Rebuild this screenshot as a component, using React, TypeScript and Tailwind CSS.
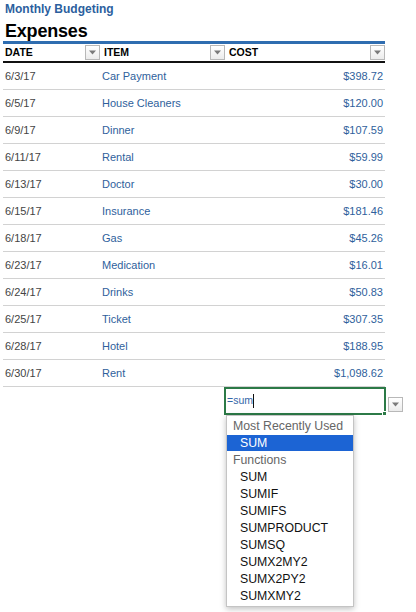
import React from "react";

const rows = [
  ["6/3/17", "Car Payment", "$398.72"],
  ["6/5/17", "House Cleaners", "$120.00"],
  ["6/9/17", "Dinner", "$107.59"],
  ["6/11/17", "Rental", "$59.99"],
  ["6/13/17", "Doctor", "$30.00"],
  ["6/15/17", "Insurance", "$181.46"],
  ["6/18/17", "Gas", "$45.26"],
  ["6/23/17", "Medication", "$16.01"],
  ["6/24/17", "Drinks", "$50.83"],
  ["6/25/17", "Ticket", "$307.35"],
  ["6/28/17", "Hotel", "$188.95"],
  ["6/30/17", "Rent", "$1,098.62"],
];

const funcs = ["SUM", "SUMIF", "SUMIFS", "SUMPRODUCT", "SUMSQ", "SUMX2MY2", "SUMX2PY2", "SUMXMY2"];

function DropBtn() {
  return (
    <div className="w-[15px] h-[15px] border border-[#b8b8b8] bg-gradient-to-b from-white to-[#ececec] flex items-center justify-center shrink-0">
      <svg width="7" height="5" viewBox="0 0 7 5">
        <path d="M0 0.5 L7 0.5 L3.5 4.5 Z" fill="#7a7a7a" />
      </svg>
    </div>
  );
}

export default function App() {
  return (
    <div
      className="relative w-[416px] h-[612px] bg-white overflow-hidden"
      style={{ fontFamily: '"Liberation Sans", Arial, sans-serif' }}
    >
      <div className="pl-[5px] pt-[1px] h-[19px] text-[12px] font-bold text-[#2c5f9e] leading-[16px]">
        Monthly Budgeting
      </div>
      <div className="pl-[5px] pt-[2px] h-[22px] text-[18px] font-bold text-black leading-[20px] tracking-[-0.2px]">
        Expenses
      </div>
      <div className="ml-[3px] w-[382px]">
        <div className="h-[3px] bg-[#2f6db0]" />
        <div className="h-[19px] flex items-center text-[10.5px] font-bold text-black border-b-2 border-[#111]">
          <div className="w-[97px] pl-[2px] flex items-center justify-between">
            <span>DATE</span>
            <DropBtn />
          </div>
          <div className="w-[125px] pl-[4px] flex items-center justify-between">
            <span>ITEM</span>
            <DropBtn />
          </div>
          <div className="flex-1 pl-[4px] flex items-center justify-between">
            <span>COST</span>
            <DropBtn />
          </div>
        </div>
        {rows.map((r) => (
          <div key={r[0]} className="h-[27px] flex items-center text-[11px] border-b border-[#d2d2d2]">
            <div className="w-[99px] pl-[2px] text-[#444]">{r[0]}</div>
            <div className="flex-1 text-[#2f5f9c]">{r[1]}</div>
            <div className="pr-[2px] text-[#2f5f9c]">{r[2]}</div>
          </div>
        ))}
      </div>
      <div className="relative ml-[224px] flex items-start">
        <div className="relative w-[162px] h-[28px] border-2 border-[#2c7a47] flex items-center pl-[1px] text-[10.5px] text-[#3467a8]">
          <span>=sum</span>
          <span className="inline-block w-[1px] h-[14px] bg-[#111]" />
          <div className="absolute right-[-3px] bottom-[-3px] w-[5px] h-[5px] bg-[#2c7a47] border border-white" />
        </div>
        <div className="ml-[2px] mt-[10px]">
          <DropBtn />
        </div>
        <div className="absolute left-[2px] top-[28px] w-[128px] bg-white border border-[#c4c4c4] shadow-[0_2px_6px_rgba(0,0,0,0.25)] text-[12.3px] leading-[17px] py-[1px]">
          <div className="h-[18px] pl-[6px] text-[#666] leading-[18px]">Most Recently Used</div>
          <div className="h-[16px] pl-[13px] bg-[#1c64d4] text-white leading-[16px]">SUM</div>
          <div className="h-[18px] pl-[6px] text-[#666] leading-[18px]">Functions</div>
          {funcs.map((f) => (
            <div key={f} className="h-[17px] pl-[13px] text-[#111]">
              {f}
            </div>
          ))}
        </div>
      </div>
    </div>
  );
}
